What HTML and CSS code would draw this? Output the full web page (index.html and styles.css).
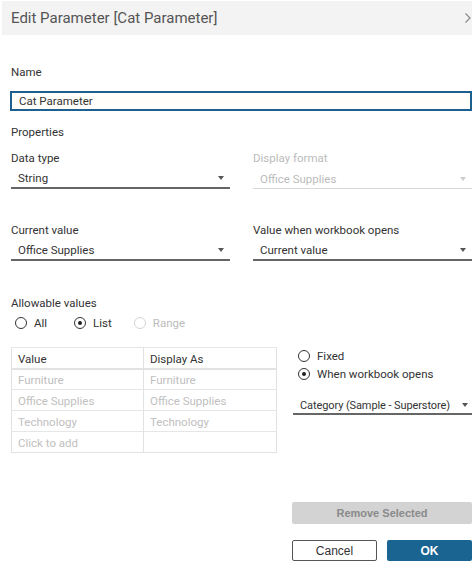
FILE: index.html
```html
<!DOCTYPE html>
<html lang="en">
<head>
    <meta charset="UTF-8">
    <meta name="viewport" content="width=device-width, initial-scale=1.0">
    <title>Edit Parameter</title>
    <link rel="stylesheet" href="styles.css">
</head>
<body>
    <div class="header">
        <span class="title">Edit Parameter [Cat Parameter]</span>
        <svg class="close" width="6" height="10" viewBox="0 0 6 10">
            <path d="M0.5 0.5 L5 5 L0.5 9.5" fill="none" stroke="#8a8a8a" stroke-width="1.2"/>
        </svg>
    </div>

    <div class="dialog">
        <div class="label name-label">Name</div>
        <input type="text" class="name-input" value="Cat Parameter" />

        <div class="label section">Properties</div>

        <div class="row first-row">
            <div class="field">
                <div class="label">Data type</div>
                <div class="select"><span class="text">String</span><span class="arrow"></span></div>
            </div>
            <div class="field disabled">
                <div class="label">Display format</div>
                <div class="select"><span class="text">Office Supplies</span><span class="arrow"></span></div>
            </div>
        </div>

        <div class="row second-row">
            <div class="field">
                <div class="label">Current value</div>
                <div class="select"><span class="text">Office Supplies</span><span class="arrow"></span></div>
            </div>
            <div class="field">
                <div class="label">Value when workbook opens</div>
                <div class="select"><span class="text">Current value</span><span class="arrow"></span></div>
            </div>
        </div>

        <div class="label allow-label">Allowable values</div>
        <div class="radio-group">
            <span class="radio"><span class="dot"></span>All</span>
            <span class="radio checked"><span class="dot"></span>List</span>
            <span class="radio disabled"><span class="dot"></span>Range</span>
        </div>

        <div class="list-area">
            <table class="values">
                <tr class="head"><td>Value</td><td>Display As</td></tr>
                <tr><td>Furniture</td><td>Furniture</td></tr>
                <tr><td>Office Supplies</td><td>Office Supplies</td></tr>
                <tr><td>Technology</td><td>Technology</td></tr>
                <tr><td>Click to add</td><td></td></tr>
            </table>

            <div class="side">
                <div class="radio"><span class="dot"></span>Fixed</div>
                <div class="radio checked"><span class="dot"></span>When workbook opens</div>
                <div class="select side-select"><span class="text">Category (Sample - Superstore)</span><span class="arrow"></span></div>
            </div>
        </div>

        <div class="footer">
            <button class="btn remove">Remove Selected</button>
            <div class="button-group">
                <button class="btn cancel">Cancel</button>
                <button class="btn ok">OK</button>
            </div>
        </div>
    </div>
</body>
</html>
```

FILE: styles.css
```css
body {
    margin: 0;
    background-color: #ffffff;
    font-family: Roboto, "Liberation Sans", Arial, sans-serif;
    font-size: 11.5px;
    color: #333333;
    overflow: hidden;
}
.header {
    display: flex;
    align-items: center;
    justify-content: space-between;
    height: 34px;
    margin: 1px 2px 0 2px;
    padding: 0 0 0 9px;
    background-color: #f3f3f3;
}
.title {
    font-size: 15px;
    color: #555555;
}
.close {
    display: block;
    margin-right: 1px;
}
.dialog {
    padding: 0 2px 0 11px;
}
.label {
    line-height: 16px;
    color: #333333;
}
.name-label {
    margin-top: 29px;
}
.name-input {
    display: block;
    box-sizing: border-box;
    width: 462px;
    height: 20px;
    margin: 11px 0 0 -1px;
    padding: 0 7px;
    border: 2px solid #1d5f8f;
    background-color: #fffefa;
    font-family: inherit;
    font-size: 11.5px;
    color: #333333;
    outline: none;
}
.section {
    margin-top: 13px;
}
.row {
    display: grid;
    grid-template-columns: 219px 219px;
    column-gap: 23px;
}
.first-row {
    margin-top: 10px;
}
.second-row {
    margin-top: 33px;
}
.select {
    display: flex;
    align-items: center;
    height: 21px;
    padding: 3px 6px 0 7px;
    box-sizing: border-box;
    border-bottom: 2px solid #666666;
    color: #333333;
}
.select .text {
    flex: 1;
    overflow: hidden;
    white-space: nowrap;
}
.arrow {
    flex: none;
    margin-left: 4px;
    border-left: 3.5px solid transparent;
    border-right: 3.5px solid transparent;
    border-top: 4px solid #555555;
}
.field .select {
    height: 23px;
}
.field.disabled .label,
.field.disabled .select {
    color: #bbbbbb;
}
.field.disabled .select {
    border-bottom: 1px solid #d8d8d8;
}
.field.disabled .arrow {
    border-top-color: #cccccc;
}
.allow-label {
    margin-top: 34px;
}
.radio-group {
    display: flex;
    margin-top: 4px;
    height: 16px;
    line-height: 16px;
    padding-left: 4px;
}
.radio-group .radio {
    margin-right: 22px;
}
.radio-group .radio:first-child {
    margin-right: 27px;
}
.radio {
    display: flex;
    align-items: center;
    color: #333333;
}
.dot {
    position: relative;
    box-sizing: border-box;
    width: 12px;
    height: 12px;
    margin-right: 7px;
    border: 1.5px solid #333333;
    border-radius: 50%;
    background-color: #ffffff;
}
.radio.checked .dot::after {
    content: "";
    position: absolute;
    left: 2.5px;
    top: 2.5px;
    width: 4px;
    height: 4px;
    border-radius: 50%;
    background-color: #222222;
}
.radio.disabled {
    color: #bbbbbb;
}
.radio.disabled .dot {
    border-color: #d4d4d4;
}
.list-area {
    display: flex;
    margin-top: 16px;
}
.values {
    flex: none;
    width: 266px;
    border-collapse: collapse;
    border: 1px solid #e2e2e2;
}
.values td {
    box-sizing: border-box;
    height: 21px;
    padding: 1px 0 0 6px;
    border-top: 1px solid #e6e6e6;
    color: #c0c0c0;
    white-space: nowrap;
}
.values td:first-child {
    width: 132px;
    border-right: 1px solid #e2e2e2;
}
.values tr.head td {
    height: 21px;
    padding-top: 2px;
    color: #333333;
    border-bottom: 2px solid #e2e2e2;
}
.side {
    flex: 1;
    min-width: 0;
    margin-left: 16px;
}
.side .radio {
    height: 18px;
    padding-left: 5px;
}
.side-select {
    margin-top: 11px;
    padding-right: 4px;
    font-size: 11px;
    letter-spacing: -0.1px;
}
.side-select .arrow {
    margin-left: 2px;
}
.footer {
    width: 180px;
    margin: 49px 0 0 auto;
}
.btn {
    box-sizing: border-box;
    font-family: "Liberation Sans", Arial, sans-serif;
    font-size: 11px;
    font-weight: bold;
    border-radius: 2px;
    cursor: pointer;
}
.remove {
    display: block;
    width: 180px;
    height: 22px;
    border: none;
    background-color: #d3d3d3;
    color: #8a8a8a;
}
.button-group {
    display: flex;
    justify-content: space-between;
    margin-top: 16px;
}
.cancel {
    width: 85px;
    height: 21px;
    border: 1px solid #555555;
    background-color: #ffffff;
    color: #333333;
    font-weight: normal;
    font-size: 12px;
}
.ok {
    width: 85px;
    height: 21px;
    border: none;
    background-color: #1a6491;
    color: #ffffff;
    font-size: 12px;
}
```
